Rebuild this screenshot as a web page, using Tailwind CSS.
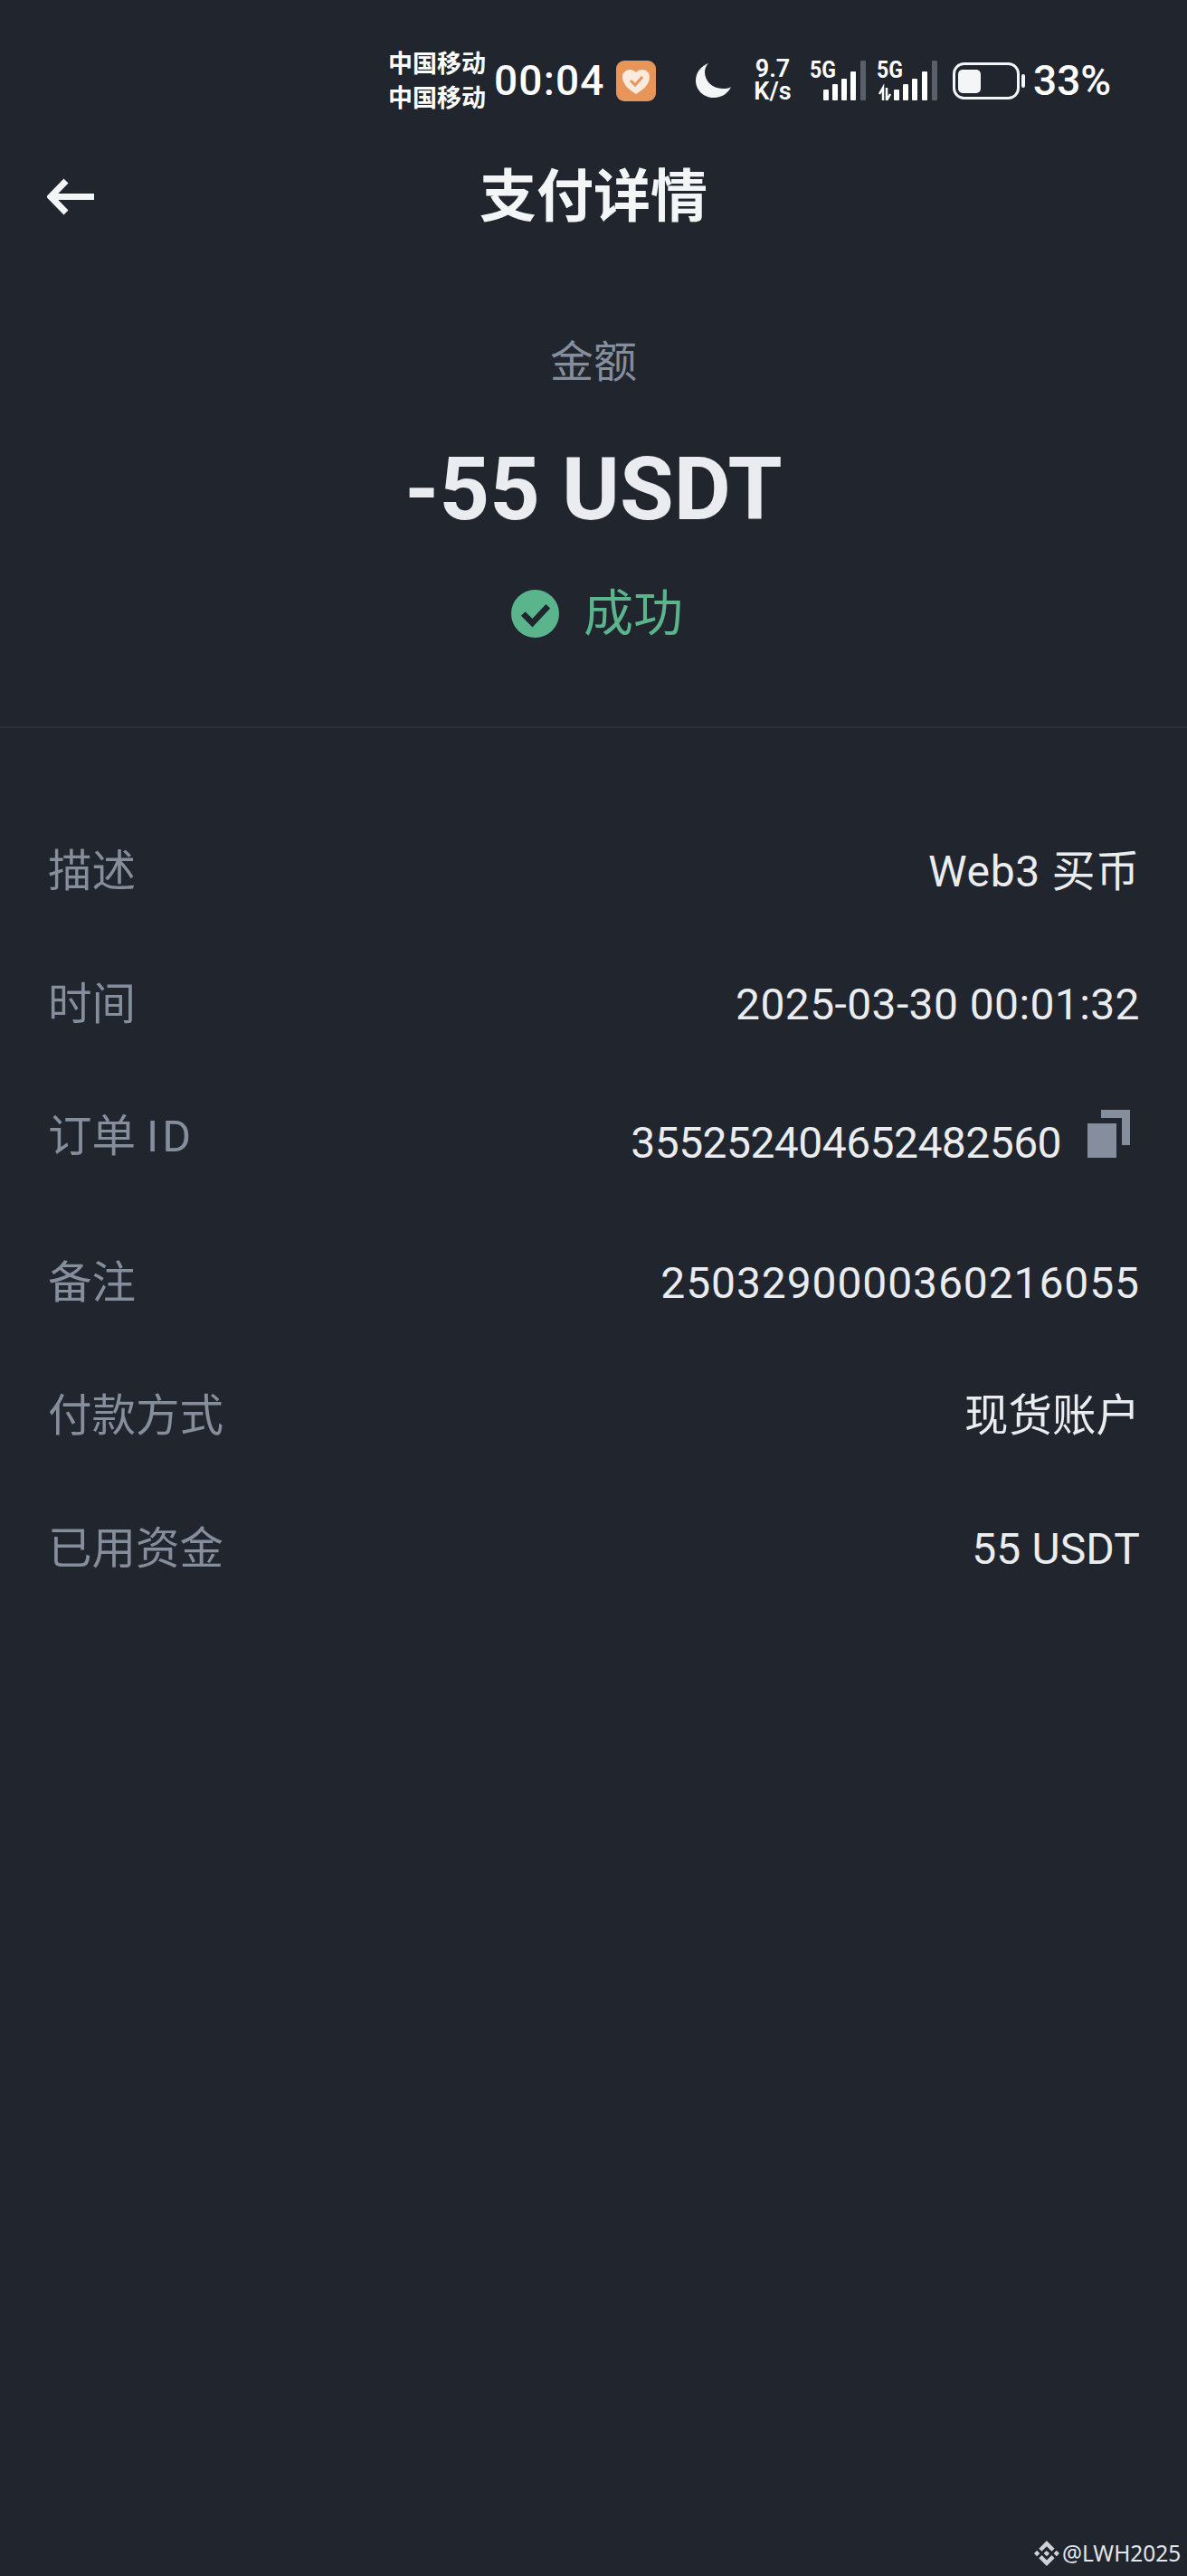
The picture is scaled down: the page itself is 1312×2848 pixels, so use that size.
<!DOCTYPE html>
<html lang="zh">
<head>
<meta charset="utf-8">
<script src="https://cdn.jsdelivr.net/npm/@tailwindcss/browser@4"></script>
</head>
<body>
<div class="relative w-[1312px] h-[2848px] overflow-hidden bg-[#20252E] text-[#EAECEF] [font-family:Roboto,'Noto_Sans_CJK_SC',sans-serif]">
  <!-- status bar -->
  <div class="flex h-[178px] items-center pl-[429px] text-white">
    <div class="w-[109px] pt-[2px] text-[27px] leading-[38px] font-bold whitespace-nowrap">
      <div>中国移动</div><div>中国移动</div>
    </div>
    <div class="ml-[8px] w-[124px] text-[46px] leading-none font-medium tracking-[1.2px] whitespace-nowrap">00:04</div>
    <svg class="ml-[11px]" width="44" height="45" viewBox="0 0 44 45"><rect width="44" height="45" rx="9" fill="#E8955A"/><path d="M22 37C12 31 7 25 7 18c0-5 4-8 8-8 3 0 5 1 7 3 2-2 4-3 7-3 4 0 8 3 8 8 0 7-5 13-15 19z" fill="#FBEADD"/><path d="M16 22l5 5 8-9" fill="none" stroke="#E8955A" stroke-width="3"/></svg>
    <svg class="ml-[44px]" width="39" height="38" viewBox="0 0 39 38"><path d="M14 0C6 3 0 10 0 19c0 11 9 19 20 19 9 0 16-5 19-12-3 2-6 2-9 2C18 28 10 19 10 10c0-4 1-7 4-10z" fill="#F4F5F7"/></svg>
    <div class="ml-[24px] flex w-[44px] flex-col items-center text-[27px] font-semibold whitespace-nowrap">
      <div class="h-[25px] leading-[25px]">9.7</div><div class="h-[25px] leading-[25px]">K/s</div>
    </div>
    <svg class="ml-[19px] mt-[-6px]" width="63" height="50" viewBox="0 -6 63 50">
      <text x="0" y="19" font-size="25" font-weight="700" fill="#fff" font-family="Roboto" textLength="29" lengthAdjust="spacingAndGlyphs">5G</text>
      <rect x="15" y="32" width="6" height="12" rx="1" fill="#fff"/><rect x="25" y="26" width="6" height="18" rx="1" fill="#fff"/><rect x="35" y="20" width="6" height="24" rx="1" fill="#fff"/><rect x="45" y="12" width="6" height="32" rx="1" fill="#fff"/><rect x="56" y="0" width="6" height="44" rx="1" fill="#5A5F68"/>
    </svg>
    <svg class="ml-[11px] mt-[-6px]" width="68" height="50" viewBox="0 -6 68 50">
      <text x="0" y="19" font-size="25" font-weight="700" fill="#fff" font-family="Roboto" textLength="29" lengthAdjust="spacingAndGlyphs">5G</text>
      <path d="M3 37l4-7v14M11 30v14M11 44l4-7" fill="none" stroke="#fff" stroke-width="2.5"/>
      <rect x="19" y="32" width="6" height="12" rx="1" fill="#fff"/><rect x="29" y="26" width="6" height="18" rx="1" fill="#fff"/><rect x="39" y="20" width="6" height="24" rx="1" fill="#fff"/><rect x="50" y="12" width="6" height="32" rx="1" fill="#fff"/><rect x="61" y="0" width="6" height="44" rx="1" fill="#5A5F68"/>
    </svg>
    <svg class="ml-[16px]" width="80" height="41" viewBox="0 0 80 41">
      <rect x="1.5" y="1.5" width="71" height="38" rx="11" fill="none" stroke="#F4F5F7" stroke-width="3"/>
      <rect x="6" y="8" width="25" height="26" rx="5" fill="#F4F5F7"/>
      <rect x="76" y="13" width="4" height="15" rx="2" fill="#F4F5F7"/>
    </svg>
    <div class="ml-[9px] text-[46px] leading-none font-medium whitespace-nowrap">33%</div>
  </div>

  <!-- header -->
  <div class="relative flex h-[78px] items-center justify-center">
    <svg class="absolute left-[52px] top-[19px]" width="52" height="41" viewBox="0 0 52 41"><path d="M21 3L4 20.5 21 38M5 20.5H52" fill="none" stroke="#F4F5F7" stroke-width="7"/></svg>
    <h1 class="text-[63px] leading-none font-semibold text-[#F4F5F7]">支付详情</h1>
  </div>

  <!-- amount -->
  <div class="flex flex-col items-center border-b-2 border-[#2A2F37] pt-[115px] pb-[93px]">
    <div class="text-[48px] leading-[60px] text-[#848E9C]">金额</div>
    <div class="mt-[50px] text-[97px] leading-[120px] font-bold text-[#EAECEF] whitespace-nowrap">-55 USDT</div>
    <div class="mt-[45px] flex h-[64px] items-center gap-[27px] pl-[8px]">
      <svg width="53" height="53" viewBox="0 0 52 52"><circle cx="26" cy="26" r="26" fill="#5BB58C"/><path d="M13 26l10 10 17-18" fill="none" stroke="#20252E" stroke-width="6.5"/></svg>
      <span class="text-[55px] leading-none text-[#5BB58C]">成功</span>
    </div>
  </div>

  <!-- rows -->
  <div class="flex flex-col pt-[84px] pl-[53px] pr-[52px] text-[48px] leading-[60px]">
    <div class="flex h-[147px] items-center justify-between">
      <span class="pt-[2px] text-[48.5px] text-[#848E9C]">描述</span>
      <span class="pt-[2px] tracking-[0.7px]">Web3 买币</span>
    </div>
    <div class="flex h-[147px] items-center justify-between">
      <span class="pt-[2px] text-[48.5px] text-[#848E9C]">时间</span>
      <span class="pt-[2px] tracking-[0.4px]">2025-03-30 00:01:32</span>
    </div>
    <div class="flex h-[162px] items-center justify-between">
      <span class="self-start mt-[44px] text-[48.5px] text-[#848E9C]">订单 <span class="tracking-[4px]">ID</span></span>
      <div class="flex items-center gap-[29px] pr-[10px]">
        <span class="tracking-[-0.55px]">355252404652482560</span>
        <svg class="mb-[22px]" width="48" height="53" viewBox="0 0 48 53"><rect x="0" y="15" width="32" height="38" fill="#848E9C"/><path d="M15 0H47V39H38V9H15z" fill="#848E9C"/></svg>
      </div>
    </div>
    <div class="flex h-[147px] items-center justify-between">
      <span class="text-[48.5px] text-[#848E9C]">备注</span>
      <span class="tracking-[0.9px]">2503290000360216055</span>
    </div>
    <div class="flex h-[147px] items-center justify-between">
      <span class="text-[48.5px] text-[#848E9C]">付款方式</span>
      <span class="text-[48.5px]">现货账户</span>
    </div>
    <div class="flex h-[147px] items-center justify-between">
      <span class="text-[48.5px] text-[#848E9C]">已用资金</span>
      <span class="tracking-[0.1px]">55 USDT</span>
    </div>
  </div>

  <!-- watermark -->
  <div class="absolute left-[1143px] top-[2808px] flex items-center gap-[3px] text-[24.5px] leading-[30px] text-[#E4E6E9] [font-family:'Noto_Sans',sans-serif]">
    <svg width="28" height="28" viewBox="0 0 126 126"><path fill="#D0D2D5" d="M38.171 53.203 62.759 28.616l24.6 24.6 14.307-14.307L62.759 0 23.864 38.896zM0 62.759l14.307-14.307 14.307 14.307-14.307 14.307zM38.171 72.315l24.588 24.587 24.6-24.599 14.315 14.3-.007.007-38.908 38.908-38.896-38.895-.02-.02zM97.211 62.759l14.307-14.307 14.307 14.307-14.307 14.307zM77.27 62.752h.006v.007L62.759 77.276 48.25 62.766l-.02-.02.02-.02 2.541-2.541 1.233-1.233 9.735-9.735z"/></svg>
    <span>@LWH2025</span>
  </div>
</div>
</body>
</html>
